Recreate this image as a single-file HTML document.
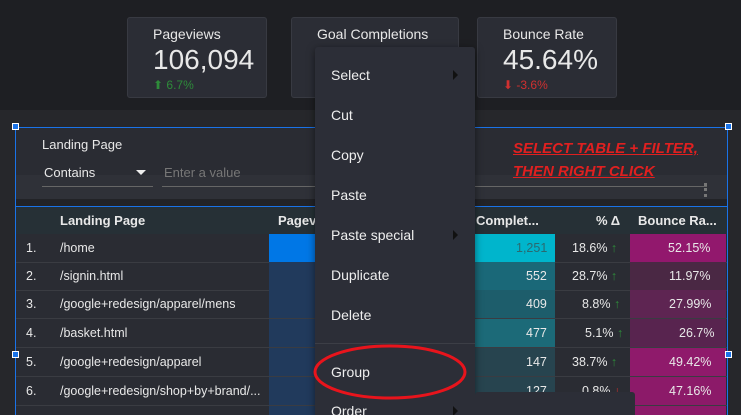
<!DOCTYPE html>
<html style="width:741px;height:415px;overflow:hidden"><head><style>
*{margin:0;padding:0;box-sizing:border-box}
body{width:741px;height:415px;overflow:hidden;background:#26272b;font-family:"Liberation Sans",sans-serif;color:#e8e8e8;position:relative}
.abs{position:absolute}
.top{left:0;top:0;width:741px;height:110px;background:#1e1f23}
.card{position:absolute;top:17px;height:81px;background:#2b2d35;border:1px solid #383a42;border-radius:3px}
.card .t{position:absolute;left:25px;top:8px;font-size:14px}
.card .v{position:absolute;left:25px;top:26px;font-size:28px}
.card .d{position:absolute;left:25px;top:60px;font-size:12px}
.row{position:absolute;left:16px;width:711px;height:29px;border-bottom:1px solid #3a3c42;font-size:12.5px}
.row span{position:absolute;top:7px}
.cell{position:absolute;top:0;height:28px}
.menu{position:absolute;left:315px;top:47px;width:160px;height:368px;background:#2c2e37;box-shadow:0 2px 8px rgba(0,0,0,.5);border-radius:3px 3px 0 0;font-size:14px;color:#eee}
.menu div{position:absolute;left:16px}
.arr{position:absolute;width:0;height:0;border-top:5px solid transparent;border-bottom:5px solid transparent;border-left:5px solid #111}
.h{position:absolute;width:7px;height:7px;background:#1a73e8;border:1px solid #fff}
</style></head><body>
<div class="abs top"></div>
<div class="card" style="left:127px;width:140px"><div class="t">Pageviews</div><div class="v">106,094</div><div class="d" style="color:#2e8b3a">⬆ 6.7%</div></div>
<div class="card" style="left:291px;width:168px"><div class="t">Goal Completions</div></div>
<div class="card" style="left:477px;width:140px"><div class="t">Bounce Rate</div><div class="v">45.64%</div><div class="d" style="color:#d03030">⬇ -3.6%</div></div>

<div class="abs" style="left:15px;top:127px;width:713px;height:300px;border:1px solid #1a73e8;background:#2a2c33"></div>
<div class="abs" style="left:16px;top:175px;width:711px;height:24px;background:#2f3138"></div>
<div class="abs" style="left:16px;top:199px;width:711px;height:7px;background:#222327"></div>
<div class="abs" style="left:15px;top:206px;width:713px;height:1px;background:#1a73e8"></div>
<div class="abs" style="left:42px;top:137px;font-size:13px">Landing Page</div>
<div class="abs" style="left:44px;top:165px;font-size:13px">Contains</div>
<div class="abs" style="left:136px;top:170px;border-left:5px solid transparent;border-right:5px solid transparent;border-top:5px solid #eee"></div>
<div class="abs" style="left:42px;top:186px;width:111px;height:1px;background:#666"></div>
<div class="abs" style="left:162px;top:186px;width:545px;height:1px;background:#666"></div>
<div class="abs" style="left:164px;top:165px;font-size:13px;color:#777">Enter a value</div>
<div class="abs" style="left:704px;top:183px;width:3px;height:14px;border-left:3px dotted #777"></div>
<div class="abs" style="left:513px;top:137px;font-size:15px;font-weight:bold;font-style:italic;color:#e02020;text-decoration:underline;line-height:23px">SELECT TABLE + FILTER,<br>THEN RIGHT CLICK</div>

<div class="abs" style="left:16px;top:207px;width:711px;height:27px;background:#263036;font-size:13px;font-weight:bold">
<span class="abs" style="left:44px;top:6px">Landing Page</span>
<span class="abs" style="left:262px;top:6px">Pagev</span>
<span class="abs" style="left:460px;top:6px">Complet...</span>
<span class="abs" style="left:580px;top:6px">% Δ</span>
<span class="abs" style="left:622px;top:6px">Bounce Ra...</span>
</div>

<div class="row" style="top:234px"><span style="left:10px">1.</span><span style="left:44px">/home</span><div class="cell" style="left:253px;width:46px;background:#0077e6"></div><div class="cell" style="left:459px;width:80px;background:#00b5cc"></div><span style="left:500px;color:#2a6a70">1,251</span><span style="left:556px">18.6% <b style="color:#2e8b3a">↑</b></span><div class="cell" style="left:614px;width:96px;background:#92186d"></div><span style="left:652px">52.15%</span></div>
<div class="row" style="top:262px"><span style="left:10px">2.</span><span style="left:44px">/signin.html</span><div class="cell" style="left:253px;width:46px;background:#213a5c"></div><div class="cell" style="left:459px;width:80px;background:#1a6878"></div><span style="left:510px">552</span><span style="left:556px">28.7% <b style="color:#2e8b3a">↑</b></span><div class="cell" style="left:614px;width:96px;background:#4a2844"></div><span style="left:653px">11.97%</span></div>
<div class="row" style="top:290px"><span style="left:10px">3.</span><span style="left:44px">/google+redesign/apparel/mens</span><div class="cell" style="left:253px;width:46px;background:#213a5c"></div><div class="cell" style="left:459px;width:80px;background:#1d5d6b"></div><span style="left:510px">409</span><span style="left:566px">8.8% <b style="color:#2e8b3a">↑</b></span><div class="cell" style="left:614px;width:96px;background:#5e2552"></div><span style="left:653px">27.99%</span></div>
<div class="row" style="top:319px"><span style="left:10px">4.</span><span style="left:44px">/basket.html</span><div class="cell" style="left:253px;width:46px;background:#213a5c"></div><div class="cell" style="left:459px;width:80px;background:#1c6a78"></div><span style="left:510px">477</span><span style="left:569px">5.1% <b style="color:#2e8b3a">↑</b></span><div class="cell" style="left:614px;width:96px;background:#58244f"></div><span style="left:663px">26.7%</span></div>
<div class="row" style="top:348px"><span style="left:10px">5.</span><span style="left:44px">/google+redesign/apparel</span><div class="cell" style="left:253px;width:46px;background:#213a5c"></div><div class="cell" style="left:459px;width:80px;background:#27444f"></div><span style="left:510px">147</span><span style="left:556px">38.7% <b style="color:#2e8b3a">↑</b></span><div class="cell" style="left:614px;width:96px;background:#8f1a6b"></div><span style="left:653px">49.42%</span></div>
<div class="row" style="top:377px"><span style="left:10px">6.</span><span style="left:44px">/google+redesign/shop+by+brand/...</span><div class="cell" style="left:253px;width:46px;background:#213a5c"></div><div class="cell" style="left:459px;width:80px;background:#27444f"></div><span style="left:510px">127</span><span style="left:566px">0.8% <b style="color:#d03030">↓</b></span><div class="cell" style="left:614px;width:96px;background:#8c1a69"></div><span style="left:653px">47.16%</span></div>
<div class="row" style="top:406px;height:9px;border:0"><div class="cell" style="left:253px;width:46px;height:9px;background:#213a5c"></div><div class="cell" style="left:614px;width:96px;height:9px;background:#8c1a69"></div></div>

<div class="h" style="left:12px;top:123px"></div>
<div class="h" style="left:725px;top:123px"></div>
<div class="h" style="left:12px;top:351px"></div>
<div class="h" style="left:725px;top:351px"></div>

<div class="menu">
<div style="top:20px">Select</div><span class="arr" style="left:138px;top:23px"></span>
<div style="top:60px">Cut</div>
<div style="top:100px">Copy</div>
<div style="top:140px">Paste</div>
<div style="top:180px">Paste special</div><span class="arr" style="left:138px;top:183px"></span>
<div style="top:220px">Duplicate</div>
<div style="top:260px">Delete</div>
<div style="left:0;top:296px;width:160px;height:1px;background:#3c3e46"></div>
<div style="top:317px">Group</div>
<div style="top:356px">Order</div><span class="arr" style="left:138px;top:359px"></span>
</div>
<div class="abs" style="left:475px;top:392px;width:160px;height:23px;background:#2c2e37;border-radius:3px 3px 0 0"></div>
<svg class="abs" style="left:0;top:0" width="741" height="415"><ellipse cx="390" cy="372" rx="75" ry="26" fill="none" stroke="#e8141c" stroke-width="3"/></svg>
</body></html>
